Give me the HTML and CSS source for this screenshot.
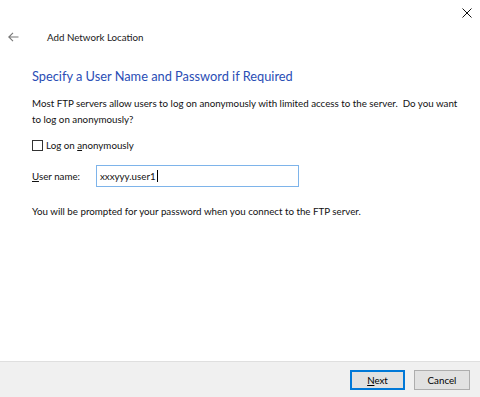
FILE: index.html
```html
<!DOCTYPE html>
<html>
<head>
<meta charset="utf-8">
<link rel="stylesheet" href="styles.css">
</head>
<body>
<div class="window">
  <div class="titlebar">
    <svg class="close" width="10" height="10" viewBox="0 0 10 10"><path d="M0.5 0.5L9.5 9.5M9.5 0.5L0.5 9.5" stroke="#111" stroke-width="1"/></svg>
  </div>
  <div class="header">
    <svg class="back" width="11" height="10" viewBox="0 0 11 10"><path d="M10.5 5H1M5 0.8L0.8 5L5 9.2" stroke="#777" stroke-width="1.1" fill="none"/></svg>
    <span class="header-title">Add Network Location</span>
  </div>
  <div class="content">
    <h1 class="heading">Specify a User Name and Password if Required</h1>
    <p class="para">Most FTP servers allow users to log on anonymously with limited access to the server.&nbsp; Do you want to log on anonymously?</p>
    <label class="check-row"><span class="checkbox"></span><span>Log on <u>a</u>nonymously</span></label>
    <div class="user-row">
      <span class="user-label"><u>U</u>ser name:</span>
      <div class="input"><span>xxxyyy.user1</span><span class="caret"></span></div>
    </div>
    <p class="note">You will be prompted for your password when you connect to the FTP server.</p>
  </div>
  <div class="footer">
    <button class="btn btn-primary"><u>N</u>ext</button>
    <button class="btn">Cancel</button>
  </div>
</div>
</body>
</html>
```
FILE: styles.css
```css
html, body {
  margin: 0;
  padding: 0;
  background: #fff;
}
body {
  font-family: Lato, "Noto Sans", sans-serif;
  font-size: 9.75px;
  color: #111;
}
.window {
  width: 480px;
  height: 397px;
  display: flex;
  flex-direction: column;
  overflow: hidden;
}
.titlebar {
  height: 26px;
  display: flex;
  justify-content: flex-end;
  align-items: flex-start;
}
.close {
  margin: 8px 8px 0 0;
}
.header {
  display: flex;
  align-items: center;
  height: 22px;
  padding-left: 8px;
}
.back {
  margin-right: 28px;
}
.header-title {
  color: #1a1a1a;
}
.content {
  flex: 1;
  padding: 0 18px 0 32px;
}
.heading {
  margin: 18px 0 0;
  font-size: 12.8px;
  font-weight: normal;
  color: #2a4db5;
  line-height: 20px;
}
.para {
  margin: 9px 0 0;
  line-height: 16px;
}
.check-row {
  display: flex;
  align-items: center;
  margin-top: 10px;
  height: 16px;
}
.checkbox {
  width: 9px;
  height: 9px;
  border: 1px solid #333;
  margin-right: 3px;
}
.user-row {
  display: flex;
  align-items: center;
  margin-top: 12px;
}
.user-label {
  width: 64px;
}
.input {
  width: 198px;
  height: 20px;
  border: 1px solid #7eb4ea;
  display: flex;
  align-items: center;
  padding-left: 3px;
}
.caret {
  width: 1px;
  height: 12px;
  background: #000;
  margin-left: 1px;
}
.note {
  margin: 16px 0 0;
  line-height: 16px;
}
.footer {
  height: 35px;
  background: #f0f0f0;
  border-top: 1px solid #dfdfdf;
  display: flex;
  justify-content: flex-end;
  align-items: center;
  gap: 9px;
  padding-right: 10px;
}
.btn {
  width: 56px;
  height: 20px;
  font-family: inherit;
  font-size: 9.75px;
  color: #000;
  background: #e1e1e1;
  border: 1px solid #adadad;
  padding: 0;
}
.btn-primary {
  width: 55px;
  border: 2px solid #0078d7;
}
```
